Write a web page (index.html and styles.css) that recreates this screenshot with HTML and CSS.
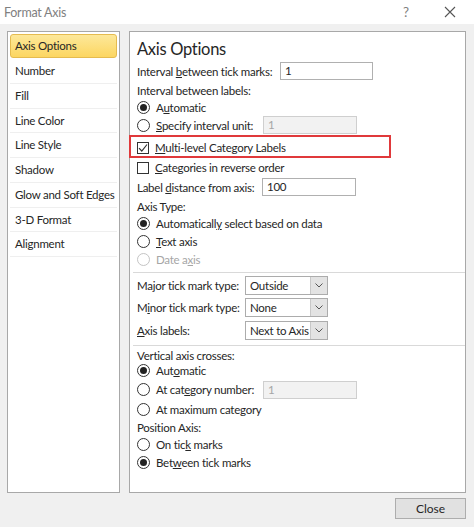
FILE: index.html
```html
<!DOCTYPE html>
<html>
<head>
  <meta charset="UTF-8">
  <title>Format Axis</title>
  <link rel="stylesheet" href="styles.css">
</head>
<body>

  <div class="titlebar">
    <span class="title">Format Axis</span>
    <span class="help">?</span>
    <span class="close-x">
      <svg width="12" height="12" viewBox="0 0 12 12"><path d="M1 1L11 11M11 1L1 11" stroke="#555" stroke-width="1.1" fill="none"/></svg>
    </span>
  </div>

  <div class="main">
    <ul class="nav">
      <li class="active">Axis Options</li>
      <li>Number</li>
      <li>Fill</li>
      <li>Line Color</li>
      <li>Line Style</li>
      <li>Shadow</li>
      <li>Glow and Soft Edges</li>
      <li>3-D Format</li>
      <li>Alignment</li>
    </ul>

    <div class="panel">
      <h2>Axis Options</h2>

      <div class="row h20">
        <span class="lbl w-tick">Interval <u>b</u>etween tick marks:</span>
        <span class="input w-long">1</span>
      </div>
      <div class="row h18"><span>Interval between labels:</span></div>
      <div class="row h16">
        <span class="radio on"></span><span>A<u>u</u>tomatic</span>
      </div>
      <div class="row h20">
        <span class="radio"></span><span class="lbl w-opt"><u>S</u>pecify interval unit:</span>
        <span class="input off">1</span>
      </div>
      <div class="row marked">
        <span class="check on">
          <svg width="10" height="10" viewBox="0 0 10 10"><path d="M1 5.2L3.8 8L9 1.5" stroke="#333" stroke-width="1.2" fill="none"/></svg>
        </span><span><u>M</u>ulti-level Category Labels</span>
      </div>
      <div class="row h19">
        <span class="check"></span><span><u>C</u>ategories in reverse order</span>
      </div>
      <div class="row h20">
        <span class="lbl w-dist">Label <u>d</u>istance from axis:</span>
        <span class="input">100</span>
      </div>
      <div class="row h18"><span>Axis Type:</span></div>
      <div class="row h17">
        <span class="radio on"></span><span>Automaticall<u>y</u> select based on data</span>
      </div>
      <div class="row h18">
        <span class="radio"></span><span><u>T</u>ext axis</span>
      </div>
      <div class="row h19 disabled">
        <span class="radio"></span><span>Date a<u>x</u>is</span>
      </div>

      <div class="sep"></div>

      <div class="row h22">
        <span class="lbl w-sel">Major tick mark type:</span>
        <span class="select"><span class="val">Outside</span><span class="arrow"><svg width="8" height="5" viewBox="0 0 8 5"><path d="M0.5 0.5L4 4L7.5 0.5" stroke="#555" fill="none"/></svg></span></span>
      </div>
      <div class="row h23">
        <span class="lbl w-sel">M<u>i</u>nor tick mark type:</span>
        <span class="select"><span class="val">None</span><span class="arrow"><svg width="8" height="5" viewBox="0 0 8 5"><path d="M0.5 0.5L4 4L7.5 0.5" stroke="#555" fill="none"/></svg></span></span>
      </div>
      <div class="row h22">
        <span class="lbl w-sel"><u>A</u>xis labels:</span>
        <span class="select"><span class="val">Next to Axis</span><span class="arrow"><svg width="8" height="5" viewBox="0 0 8 5"><path d="M0.5 0.5L4 4L7.5 0.5" stroke="#555" fill="none"/></svg></span></span>
      </div>

      <div class="sep wide"></div>

      <div class="row h13"><span>Vertical axis crosses:</span></div>
      <div class="row h16">
        <span class="radio on"></span><span>Aut<u>o</u>matic</span>
      </div>
      <div class="row h23">
        <span class="radio"></span><span class="lbl w-opt">At cat<u>e</u>gory number:</span>
        <span class="input off">1</span>
      </div>
      <div class="row h17">
        <span class="radio"></span><span>At maximum cate<u>g</u>ory</span>
      </div>
      <div class="row h18"><span>Position Axis:</span></div>
      <div class="row h16">
        <span class="radio"></span><span>On tic<u>k</u> marks</span>
      </div>
      <div class="row h21">
        <span class="radio on"></span><span>Bet<u>w</u>een tick marks</span>
      </div>
    </div>
  </div>

  <div class="footer">
    <button type="button" class="btn">Close</button>
  </div>

</body>
</html>
```

FILE: styles.css
```css
html, body {
  margin: 0;
  padding: 0;
  width: 100%;
  height: 100%;
  font-family: Lato, "Noto Sans", sans-serif;
  font-size: 11.5px;
  letter-spacing: -0.25px;
  color: #262626;
  background: #f0f0f0;
}

.titlebar {
  display: flex;
  align-items: center;
  height: 24px;
  background: #fff;
  padding: 0 0 0 4px;
}
.title {
  flex: 1;
  font-size: 12.5px;
  color: #808080;
}
.help {
  width: 20px;
  font-size: 13.5px;
  color: #808080;
  margin-right: 21px;
}
.close-x {
  display: flex;
  width: 24px;
  margin-right: 6px;
}

.main {
  display: flex;
  gap: 9px;
  padding: 7px 8px 0 7px;
  height: 462px;
}

.nav {
  list-style: none;
  margin: 0;
  padding: 2px 2px;
  width: 113px;
  box-sizing: border-box;
  background: #fff;
  border: 1px solid #a8a8a8;
}
.nav li {
  height: 24.75px;
  box-sizing: border-box;
  line-height: 23px;
  padding-left: 5px;
  border-bottom: 1px solid #efefef;
  white-space: nowrap;
}
.nav li.active {
  height: 24px;
  line-height: 22px;
  padding-left: 4px;
  background: linear-gradient(#fde89a, #fcd661);
  border: 1px solid #e5bb4f;
  border-radius: 3px;
  margin-bottom: 1px;
}

.panel {
  flex: 1;
  background: #fff;
  border: 1px solid #a8a8a8;
  padding: 6px 0 0 6px;
}
.panel h2 {
  margin: 0;
  font-weight: normal;
  font-size: 16.5px;
  letter-spacing: -0.3px;
  height: 23px;
  line-height: 22px;
  padding-left: 1px;
}

.row {
  display: flex;
  align-items: center;
  white-space: nowrap;
  padding-left: 1px;
}
.h13 { height: 13px; }
.h16 { height: 16px; }
.h17 { height: 17px; }
.h18 { height: 18px; }
.h19 { height: 19px; }
.h20 { height: 20px; }
.h21 { height: 21px; }
.h22 { height: 22px; }
.h23 { height: 23px; }

.row.marked {
  box-sizing: border-box;
  height: 23px;
  margin-left: -7px;
  padding: 2px 0 0 6px;
  width: 262px;
  border: 2px solid #e0393b;
}

.disabled {
  color: #a6a6a6;
}

.lbl {
  display: inline-block;
  flex-shrink: 0;
}
.w-tick { width: 143px; }
.w-opt { width: 107px; }
.w-dist { width: 125px; }
.w-sel { width: 108px; }

.input {
  box-sizing: border-box;
  width: 94px;
  height: 18px;
  line-height: 16px;
  padding-left: 4px;
  border: 1px solid #b0b0b0;
  background: #fff;
}
.input.w-long { width: 93px; }
.input.off {
  background: #f2f2f2;
  border-color: #cfcfcf;
  color: #a6a6a6;
}

.radio {
  position: relative;
  flex-shrink: 0;
  box-sizing: border-box;
  width: 13px;
  height: 13px;
  margin-right: 6px;
  border: 1px solid #333;
  border-radius: 50%;
  background: #fff;
}
.radio.on::after {
  content: "";
  position: absolute;
  left: 2px;
  top: 2px;
  width: 7px;
  height: 7px;
  border-radius: 50%;
  background: #222;
}
.disabled .radio {
  border-color: #c4c4c4;
}

.check {
  display: flex;
  align-items: center;
  justify-content: center;
  flex-shrink: 0;
  box-sizing: border-box;
  width: 12px;
  height: 12px;
  margin-right: 6px;
  border: 1px solid #333;
  background: #fff;
}

.select {
  display: flex;
  box-sizing: border-box;
  width: 83px;
  height: 19px;
  border: 1px solid #acacac;
  background: #fff;
}
.select .val {
  flex: 1;
  line-height: 17px;
  padding-left: 4px;
}
.select .arrow {
  display: flex;
  align-items: center;
  justify-content: center;
  width: 16px;
  background: #e3e3e3;
  border-left: 1px solid #c8c8c8;
}

.sep {
  height: 1px;
  margin: 3px 0 1px -3px;
  background: #d9d9d9;
}
.sep.wide {
  margin: 4px 0 3px -3px;
}

.footer {
  display: flex;
  justify-content: flex-end;
  padding: 5px 8px 0 0;
}
.btn {
  width: 71px;
  height: 21px;
  font-family: inherit;
  font-size: 12px;
  color: #262626;
  background: #e1e1e1;
  border: 1px solid #adadad;
  padding: 0;
}
```
